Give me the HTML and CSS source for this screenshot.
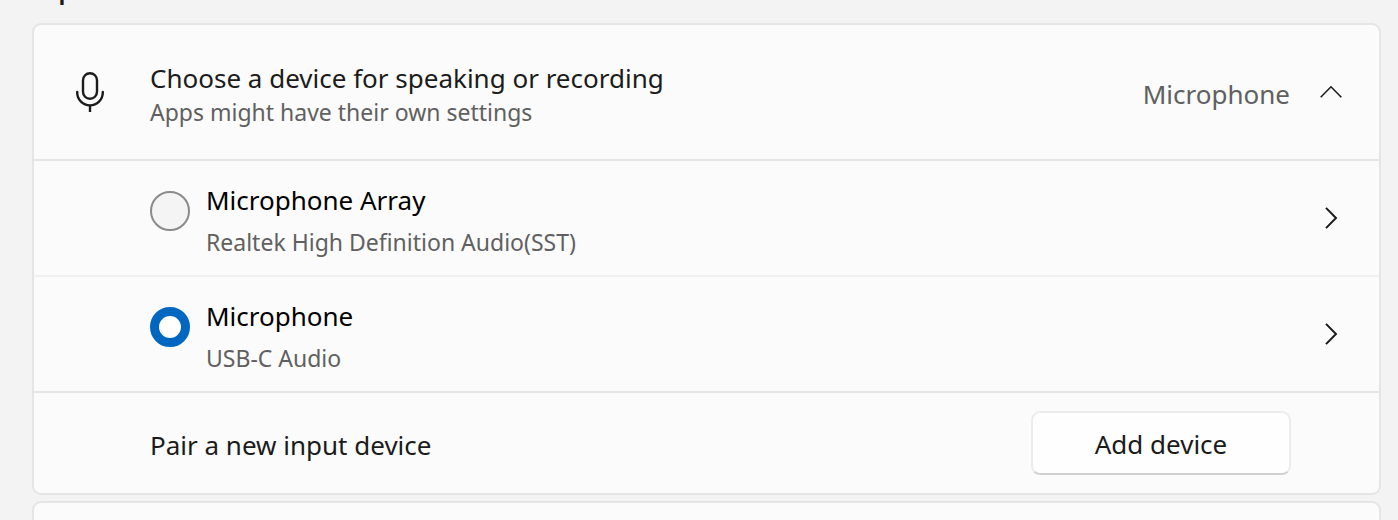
FILE: index.html
```html
<!DOCTYPE html>
<html lang="en">
<head>
    <meta charset="UTF-8">
    <meta name="viewport" content="width=device-width, initial-scale=1.0">
    <title>Sound settings</title>
    <link rel="stylesheet" href="styles.css">
</head>
<body>
    <main class="page">
        <h2 class="section-title">Input</h2>

        <section class="card">
            <button type="button" class="card-header" aria-expanded="true">
                <svg class="mic-icon" viewBox="0 0 28 40" aria-hidden="true">
                    <rect x="7" y="1.2" width="14" height="25.6" rx="7"></rect>
                    <path class="mic-stand" d="M1.2 20v.6a12.8 12.8 0 0 0 25.6 0V20"></path>
                    <path d="M14 33.5V40"></path>
                </svg>
                <span class="header-text">
                    <span class="title">Choose a device for speaking or recording</span>
                    <span class="subtitle">Apps might have their own settings</span>
                </span>
                <span class="current">Microphone</span>
                <svg class="chevron" viewBox="0 0 24 24" aria-hidden="true">
                    <path d="M1.7 17.2 12 6.8l10.3 10.4"></path>
                </svg>
            </button>

            <!-- Input devices -->
            <div class="device">
                <input type="radio" class="radio" name="input-device" id="mic-array">
                <label class="device-label" for="mic-array">
                    <span class="title">Microphone Array</span>
                    <span class="subtitle">Realtek High Definition Audio(SST)</span>
                </label>
                <a class="details" href="#mic-array" aria-label="Microphone Array properties">
                    <svg class="chevron chevron-right" viewBox="0 0 24 24" aria-hidden="true">
                        <path d="M7 1.9 17 12 7 22.1"></path>
                    </svg>
                </a>
            </div>
            <div class="device">
                <input type="radio" class="radio" name="input-device" id="mic-usb" checked>
                <label class="device-label" for="mic-usb">
                    <span class="title">Microphone</span>
                    <span class="subtitle">USB-C Audio</span>
                </label>
                <a class="details" href="#mic-usb" aria-label="Microphone properties">
                    <svg class="chevron chevron-right" viewBox="0 0 24 24" aria-hidden="true">
                        <path d="M7 1.9 17 12 7 22.1"></path>
                    </svg>
                </a>
            </div>

            <div class="pair">
                <span class="title">Pair a new input device</span>
                <button type="button" class="add-button">Add device</button>
            </div>
        </section>

        <section class="card next-card"></section>
    </main>
</body>
</html>
```
FILE: styles.css
```css
* {
    box-sizing: border-box;
}

body {
    margin: 0;
    height: 100vh;
    overflow: hidden;
    background-color: #f3f3f3;
    color: #1b1b1b;
    font-family: "Segoe UI", "Noto Sans", "Open Sans", sans-serif;
    font-size: 26px;
    line-height: 36px;
}

button {
    font: inherit;
    color: inherit;
}

/* The page is scrolled so only the tail of the heading shows */
.page {
    display: flex;
    flex-direction: column;
    gap: 6px;
    padding: 0 17px 0 32px;
    margin-top: -29px;
}

.section-title {
    margin: 0 0 10px;
    font-size: 26px;
    font-weight: 600;
    line-height: 36px;
}

.card {
    border: 2px solid #e5e5e5;
    border-radius: 9px;
    background-color: #fbfbfb;
}

.next-card {
    min-height: 20px;
    border-bottom: 0;
    border-radius: 9px 9px 0 0;
}

/* Expander header */
.card-header {
    display: flex;
    align-items: center;
    width: 100%;
    height: 134px;
    padding: 0 36px 0 42px;
    border: 0;
    background: none;
    text-align: left;
}

.mic-icon {
    width: 28px;
    height: 40px;
    margin-right: 46px;
    fill: none;
    stroke: #1b1b1b;
    stroke-width: 2.4;
}

.mic-stand {
    stroke-linecap: round;
}

.header-text {
    display: flex;
    flex-direction: column;
    flex: 1;
    padding-top: 4px;
}

.subtitle {
    color: #606060;
    font-size: 23px;
    line-height: 32px;
}

.current {
    margin-right: 29px;
    padding-top: 4px;
    color: #606060;
}

.chevron {
    display: block;
    width: 24px;
    height: 24px;
    fill: none;
    stroke: #1b1b1b;
    stroke-width: 1.6;
}

.chevron-right {
    stroke-width: 2;
}

/* Device rows */
.device {
    display: flex;
    align-items: center;
    height: 116px;
    padding: 0 36px 0 116px;
    border-top: 2px solid #e5e5e5;
}

.device + .device {
    border-top-color: #f2f2f2;
}

.device .title {
    color: #000;
}

.radio {
    appearance: none;
    width: 40px;
    height: 40px;
    margin: 0 16px 14px 0;
    border: 2px solid #8a8a8a;
    border-radius: 50%;
    background-color: #f4f4f4;
}

.radio:checked {
    border: 9px solid #0067c0;
    background-color: #fff;
}

.device-label {
    display: flex;
    flex-direction: column;
    flex: 1;
    gap: 8px;
    padding-top: 4px;
}

/* Pair row */
.pair {
    display: flex;
    align-items: center;
    justify-content: space-between;
    height: 102px;
    padding: 0 88px 0 116px;
    border-top: 2px solid #e5e5e5;
}

.pair .title {
    padding-top: 4px;
}

.add-button {
    width: 260px;
    height: 64px;
    padding: 2px 0 0;
    border: 2px solid #ececec;
    border-bottom-color: #d0d0d0;
    border-radius: 9px;
    background-color: #fefefe;
}
```
